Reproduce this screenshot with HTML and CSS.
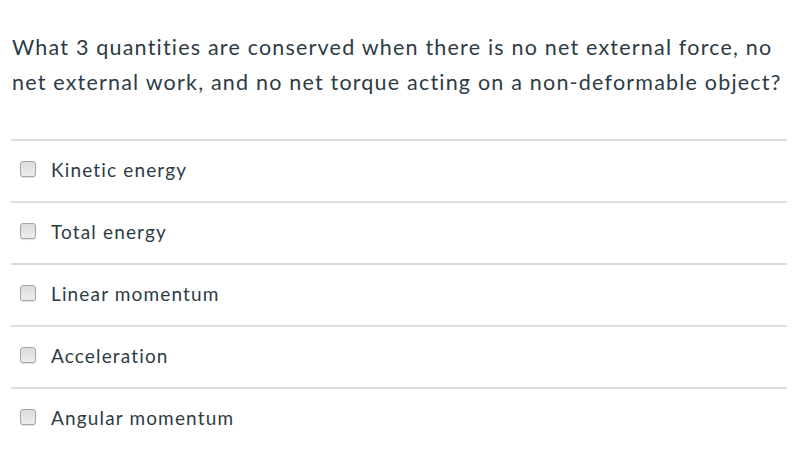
FILE: index.html
```html
<!DOCTYPE html>
<html>
<head>
<meta charset="utf-8">
<link rel="stylesheet" href="styles.css">
</head>
<body>
<div class="quiz">
  <div class="question">What 3 quantities are conserved when there is no net external force, no net external work, and no net torque acting on a non-deformable object?</div>
  <div class="answers">
    <label class="answer"><span class="box"></span><span class="label">Kinetic energy</span></label>
    <label class="answer"><span class="box"></span><span class="label">Total energy</span></label>
    <label class="answer"><span class="box"></span><span class="label">Linear momentum</span></label>
    <label class="answer"><span class="box"></span><span class="label">Acceleration</span></label>
    <label class="answer"><span class="box"></span><span class="label">Angular momentum</span></label>
  </div>
</div>
</body>
</html>
```
FILE: styles.css
```css
html, body {
  margin: 0;
  padding: 0;
  background: #ffffff;
}
body {
  font-family: Lato, "Open Sans", sans-serif;
  color: #2d3b45;
}
.quiz {
  padding: 30px 18px 0 11px;
}
.question {
  font-size: 21.5px;
  letter-spacing: 1.2px;
  line-height: 35px;
  padding-left: 1px;
  margin-bottom: 39px;
}
.answers {
  display: flex;
  flex-direction: column;
}
.answer {
  display: flex;
  align-items: center;
  height: 56px;
  padding-bottom: 4px;
  border-top: 2px solid #dddddd;
  padding-left: 9px;
}
.box {
  width: 14px;
  height: 14px;
  border: 1px solid #a6a6a6;
  border-radius: 3px;
  background: linear-gradient(#dcdcdc, #ededed);
  box-shadow: 0 1px 1px rgba(0,0,0,0.12);
  flex: none;
}
.label {
  font-size: 19px;
  letter-spacing: 1.15px;
  margin-left: 15px;
}
```
